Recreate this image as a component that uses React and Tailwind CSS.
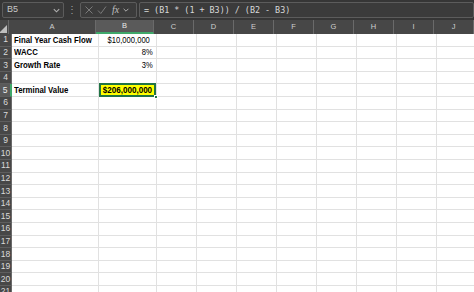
import React from "react";

const cols = [
  { l: "A", w: "w-[87px]" },
  { l: "B", w: "w-[58px]" },
  { l: "C", w: "w-[40px]" },
  { l: "D", w: "w-[40px]" },
  { l: "E", w: "w-[40px]" },
  { l: "F", w: "w-[40px]" },
  { l: "G", w: "w-[40px]" },
  { l: "H", w: "w-[40px]" },
  { l: "I", w: "w-[40px]" },
  { l: "J", w: "w-[40px]" },
];

const data = {
  1: ["Final Year Cash Flow", "$10,000,000", "pr-[6px]"],
  2: ["WACC", "8%", "pr-[3px]"],
  3: ["Growth Rate", "3%", "pr-[3px]"],
  5: ["Terminal Value", "$206,000,000", "pr-[3px]"],
};

function Chevron({ className }) {
  return (
    <svg viewBox="0 0 10 10" className={className} fill="none" stroke="currentColor" strokeWidth="1.2">
      <polyline points="2,3.5 5,6.5 8,3.5" />
    </svg>
  );
}

export default function App() {
  const rows = Array.from({ length: 22 }, (_, i) => i + 1);
  return (
    <div className="w-[474px] h-[292px] overflow-hidden bg-white font-['Liberation_Sans',sans-serif]">
      {/* formula bar */}
      <div className="h-[20px] bg-[#363636] flex items-center pl-[2px] gap-[2px]">
        <div className="w-[62px] h-[16px] border border-[#5c5c5c] rounded-[2px] bg-[#3b3b3b] flex items-center justify-between pl-[4px] pr-[2px]">
          <span className="text-[9px] text-[#c8c8c8]">B5</span>
          <Chevron className="w-[9px] h-[9px] text-[#b0b0b0]" />
        </div>
        <div className="w-[12px] flex justify-center text-[#a0a0a0] text-[10px] leading-none">⋮</div>
        <div className="w-[57px] h-[16px] border border-[#5c5c5c] rounded-[2px] bg-[#3b3b3b] flex items-center gap-[3px] pl-[3px]">
          <svg viewBox="0 0 10 10" className="w-[10px] h-[10px] text-[#7a7a7a]" fill="none" stroke="currentColor" strokeWidth="1">
            <line x1="1.5" y1="1.5" x2="8.5" y2="8.5" />
            <line x1="8.5" y1="1.5" x2="1.5" y2="8.5" />
          </svg>
          <svg viewBox="0 0 10 10" className="w-[10px] h-[10px] text-[#7a7a7a]" fill="none" stroke="currentColor" strokeWidth="1">
            <polyline points="1,5.5 3.8,8.5 9,1.5" />
          </svg>
          <span className="ml-[2px] text-[10px] italic text-[#c0c0c0] font-['Liberation_Serif',serif] leading-none">fx</span>
          <Chevron className="w-[8px] h-[8px] text-[#b0b0b0]" />
        </div>
        <div className="flex-1 h-[16px] border border-[#5c5c5c] rounded-[2px] bg-[#3b3b3b] flex items-center pl-[4px]">
          <span className="text-[8.4px] text-[#d8d8d8] font-['DejaVu_Sans_Mono',monospace] whitespace-pre">= (B1 * (1 + B3)) / (B2 - B3)</span>
        </div>
      </div>

      {/* column headers */}
      <div className="flex h-[14px] bg-[#474747]">
        <div className="w-[12px] h-full relative border-r border-[#6a6a6a]">
          <svg viewBox="0 0 8 8" className="absolute right-[1px] bottom-[1px] w-[8px] h-[8px]">
            <polygon points="8,0 8,8 0,8" fill="#bfbfbf" />
          </svg>
        </div>
        {cols.map((c) => (
          <div
            key={c.l}
            className={`${c.w} shrink-0 h-full flex items-center justify-center text-[7.5px] border-r border-[#6a6a6a] ${
              c.l === "B" ? "bg-[#5a5a5a] border-b-2 border-b-[#3fa86a] text-[#e8e8e8]" : "text-[#cfcfcf]"
            }`}
          >
            {c.l}
          </div>
        ))}
      </div>

      {/* rows */}
      {rows.map((r) => {
        const d = data[r];
        return (
          <div key={r} className="flex h-[12.6px]">
            <div
              className={`w-[12px] shrink-0 h-full flex items-center justify-center text-[8.5px] border-b border-[#5e5e5e] overflow-visible whitespace-nowrap ${
                r === 5 ? "bg-[#5a5a5a] text-[#ececec] border-r-2 border-r-[#3fa86a]" : "bg-[#474747] text-[#dadada] border-r border-r-[#6a6a6a]"
              }`}
            >
              {r}
            </div>
            {cols.map((c) => {
              if (c.l === "A") {
                return (
                  <div key={c.l} className={`${c.w} shrink-0 h-full border-r border-b border-[#e1e1e1] flex items-center pl-[2px] whitespace-nowrap`}>
                    {d ? (
                      <span className="inline-block origin-left scale-x-[0.82] text-[9.5px] font-bold text-black">{d[0]}</span>
                    ) : null}
                  </div>
                );
              }
              if (c.l === "B") {
                if (r === 5) {
                  return (
                    <div key={c.l} className={`${c.w} shrink-0 h-full border-r border-b border-[#e1e1e1] relative`}>
                      <div className="absolute left-[0px] top-[-1px] right-[0px] bottom-[-1px] bg-[#ffff00] border-2 border-[#217346] flex items-center justify-end pr-[2px] whitespace-nowrap">
                        <span className="inline-block origin-right scale-x-[0.85] text-[9.5px] font-bold text-black">{d[1]}</span>
                      </div>
                      <div className="absolute right-[-2px] bottom-[-3px] w-[4px] h-[4px] bg-[#217346] border border-white" />
                    </div>
                  );
                }
                return (
                  <div key={c.l} className={`${c.w} shrink-0 h-full border-r border-b border-[#e1e1e1] flex items-center justify-end ${d ? d[2] : ""} whitespace-nowrap`}>
                    {d ? (
                      <span className="inline-block origin-right scale-x-[0.8] text-[9.5px] text-black">{d[1]}</span>
                    ) : null}
                  </div>
                );
              }
              return <div key={c.l} className={`${c.w} shrink-0 h-full border-r border-b border-[#e1e1e1]`} />;
            })}
          </div>
        );
      })}
    </div>
  );
}
